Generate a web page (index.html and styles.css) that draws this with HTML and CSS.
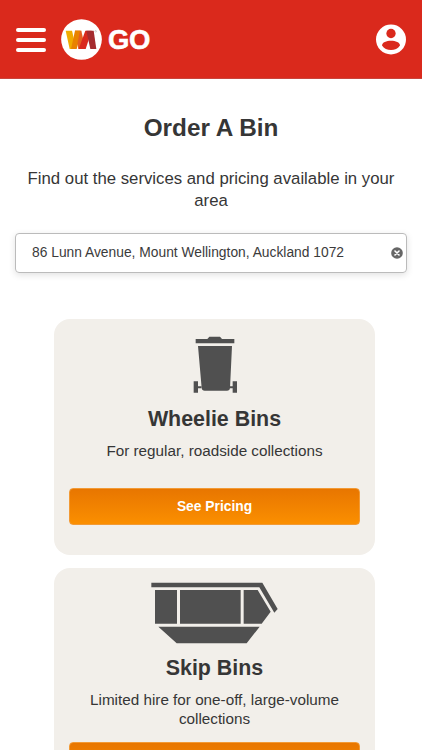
FILE: index.html
```html
<!DOCTYPE html>
<html lang="en">
<head>
<meta charset="utf-8">
<meta name="viewport" content="width=device-width, initial-scale=1">
<title>Order A Bin</title>
<link rel="stylesheet" href="styles.css">
</head>
<body>
<header class="topbar">
  <button class="icon-button menu" aria-label="Menu"><span></span><span></span><span></span></button>
  <a class="brand">
    <svg class="brand-mark" viewBox="0 0 123 123" aria-hidden="true">
      <circle cx="61.500" cy="61.500" r="61" fill="#fff"/>
      <path d="M14 35h19l13 55H26z" fill="#f0ab00"/>
      <path d="M42 35h19L47 90H30z" fill="#e98300"/>
      <path d="M42 35h19l12 55H52z" fill="#e6601f"/>
      <path d="M42 35h15L47 84l-6-18z" fill="#e98300"/>
      <path d="M73 35h19L74 90H53z" fill="#da291c"/>
      <path d="M76 35h22l8 55H88z" fill="#a52b2e"/>
      <circle cx="104" cy="37" r="2.500" fill="none" stroke="#888" stroke-width="1"/>
    </svg>
    <span class="brand-name">GO</span>
  </a>
  <button class="icon-button account" aria-label="Account">
    <svg viewBox="0 0 90 92"><circle cx="45" cy="46" r="45" fill="#fff"/><circle cx="45" cy="28" r="14" fill="#da291c"/><path d="M18 64c0-19 54-19 54 0-11 18-43 18-54 0z" fill="#da291c"/></svg>
  </button>
</header>
<main>
  <h1>Order A Bin</h1>
  <p class="intro">Find out the services and pricing available in your<br>area</p>
  <div class="address">
    <span class="address-text">86 Lunn Avenue, Mount Wellington, Auckland 1072</span>
    <svg class="clear" viewBox="0 0 12 12"><circle cx="6" cy="6" r="5.800" fill="#666"/><path d="M4 4l4 4M8 4L4 8" stroke="#fff" stroke-width="1.600" stroke-linecap="round"/></svg>
  </div>
  <section class="cards">
    <article class="card wheelie">
      <svg class="bin-icon" viewBox="69 48 135 174" fill="#505050"><path d="M77 57h35l6-7h32l6 7h37v13H77zM84 78h102l-6 126q-1 8-9 8h-67q-8 0-9-8zM71 184h13v15h10v6H84v13H71zM188 184h13v34h-13v-13h-10v-6h10z"/></svg>
      <h2>Wheelie Bins</h2>
      <p>For regular, roadside collections</p>
      <button class="pricing">See Pricing</button>
    </article>
    <article class="card skip">
      <svg class="skip-icon" viewBox="33 36 381 186" fill="#505050"><path d="M34 38h333l46 79-10 11-45-76H34zM45 60h66v101H45zM120 60h182v101H120zM311 60h42l39 65-27 36h-54zM55 170h304l-39 50H110z"/></svg>
      <h2>Skip Bins</h2>
      <p>Limited hire for one-off, large-volume<br>collections</p>
      <button class="pricing" aria-label="Skip bin prices"></button>
    </article>
  </section>
</main>
</body>
</html>
```
FILE: styles.css
```css
* { box-sizing: border-box; }
body {
  margin: 0;
  height: 750px;
  display: flex;
  flex-direction: column;
  background: #fff;
  color: #3b3b3b;
  font-family: "Liberation Sans", Arial, sans-serif;
  text-align: center;
}
main { flex: 1; min-height: 0; overflow: hidden; }
h1, h2, p { margin: 0; color: #363636; }
button { border: 0; padding: 0; font: inherit; }
svg { display: block; }
.topbar {
  flex: none;
  height: 79px;
  padding: 1px 16px 0;
  display: flex;
  align-items: center;
  background: #da291c;
  border-bottom: 1px solid #c9453c;
}
.icon-button { background: none; }
.menu { width: 30px; display: flex; flex-direction: column; gap: 6px; }
.menu span { height: 4px; border-radius: 2px; background: #fff; }
.brand { margin-left: 15px; display: flex; align-items: center; gap: 6px; }
.brand-mark { width: 41px; height: 41px; }
.brand-name { color: #fff; font-size: 27.500px; font-weight: bold; line-height: 40px; letter-spacing: -.3px; -webkit-text-stroke: .5px #fff; }
.account { width: 30px; margin-left: auto; }
.account svg { width: 30px; height: 31px; }
h1 { margin-top: 34px; font-size: 24.300px; line-height: 30px; }
.intro { margin-top: 25px; font-size: 16.760px; line-height: 21.500px; white-space: nowrap; }
.address {
  height: 40px;
  margin: 22px 15px 0;
  padding: 0 3px 0 16px;
  display: flex;
  align-items: center;
  justify-content: space-between;
  border: 1px solid #bbb;
  border-radius: 4px;
  box-shadow: 0 2px 7px rgba(0, 0, 0, .12);
}
.address-text { font-size: 13.820px; line-height: 18px; padding-bottom: 2px; white-space: nowrap; }
.clear { width: 12px; height: 12px; }
.cards { width: 321px; margin: 46px 0 0 54px; display: grid; gap: 13px; }
.card {
  height: 236px;
  padding: 17px 15px 0;
  display: flex;
  flex-direction: column;
  align-items: center;
  border-radius: 16px;
  background: #f2efea;
}
.card h2 { font-size: 21.400px; line-height: 26px; white-space: nowrap; }
.card p { font-size: 15.250px; line-height: 18.500px; white-space: nowrap; }
.bin-icon { width: 45px; height: 58px; margin-left: 1px; }
.wheelie h2 { margin-top: 12px; }
.wheelie p { margin-top: 10px; }
.pricing {
  width: 291px;
  height: 37px;
  flex: none;
  border: 1px solid #f29a35;
  border-radius: 4px;
  color: #fff;
  background: linear-gradient(#e87600, #fb8f00);
  font-size: 13.800px;
  font-weight: bold;
}
.wheelie .pricing { margin-top: 27px; }
.skip { height: 255px; padding-top: 14px; }
.skip-icon { width: 127px; height: 62px; }
.skip h2 { margin-top: 11px; }
.skip p { margin-top: 10px; }
.skip .pricing { margin-top: 14px; }
```
